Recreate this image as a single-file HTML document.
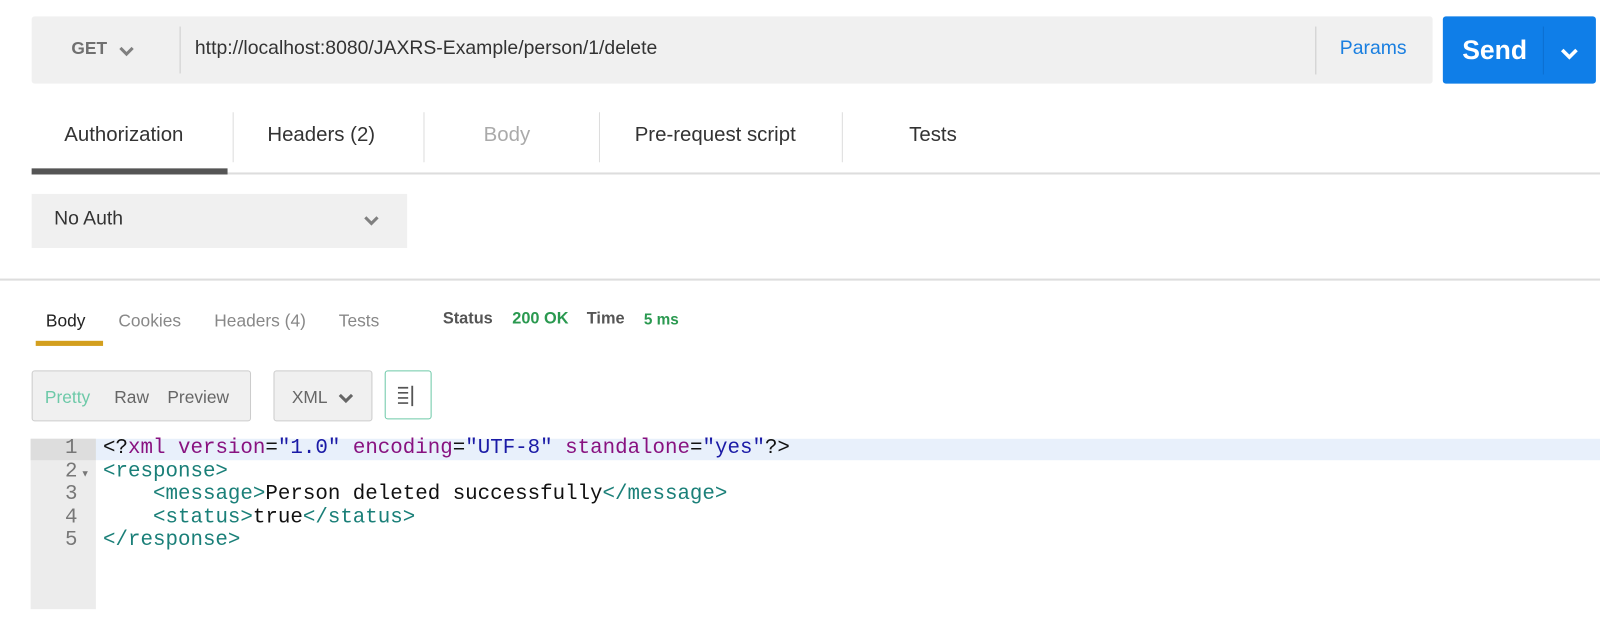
<!DOCTYPE html>
<html><head><style>
body{margin:0;width:1600px;height:609px;background:#fff;position:relative;overflow:hidden;font-family:"Liberation Sans",sans-serif;}
#w{position:absolute;left:0;top:0;width:1600px;height:609px;transform:scale(1.0204);transform-origin:0 0;}
.a{position:absolute;}
.t{position:absolute;white-space:nowrap;}
.code{font-family:"Liberation Mono",monospace;font-size:20.4px;line-height:22.5px;}
.tg{color:#1a7f78}.at{color:#881280}.st{color:#1a1aa6}
</style></head><body><div id="w">
<div class="a" style="left:31px;top:16px;width:1373px;height:66px;background:#f0f0f0;border-radius:3px"></div>
<div class="t" style="left:70px;top:38px;font-size:17px;color:#707070;font-weight:bold">GET</div>
<svg class="a" style="left:116px;top:44px" width="16" height="12"><path d="M2 3l6 6 6-6" stroke="#808080" stroke-width="3" fill="none"/></svg>
<div class="a" style="left:176px;top:26px;width:1px;height:46px;background:#ccc"></div>
<div class="t" style="left:191px;top:37px;font-size:19px;color:#333">http://localhost:8080/JAXRS-Example/person/1/delete</div>
<div class="a" style="left:1289px;top:26px;width:1px;height:47px;background:#ccc"></div>
<div class="t" style="left:1313px;top:37px;font-size:19px;color:#1a7fe0">Params</div>
<div class="a" style="left:1414px;top:16px;width:150px;height:66px;background:#0f7ee8;border-radius:3px"></div>
<div class="t" style="left:1433px;top:34px;font-size:26px;color:#fff;font-weight:bold">Send</div>
<div class="a" style="left:1512px;top:26px;width:1px;height:47px;background:#0b6fd0"></div>
<svg class="a" style="left:1528px;top:46px" width="20" height="14"><path d="M3 3l7 7 7-7" stroke="#fff" stroke-width="3.5" fill="none"/></svg>

<div class="a" style="left:31px;top:169px;width:1569px;height:2px;background:#ddd"></div>
<div class="a" style="left:31px;top:165px;width:192px;height:6px;background:#555"></div>
<div class="t" style="left:63px;top:121px;font-size:20px;color:#333">Authorization</div>
<div class="a" style="left:228px;top:110px;width:1px;height:49px;background:#ddd"></div>
<div class="t" style="left:262px;top:121px;font-size:20px;color:#333">Headers (2)</div>
<div class="a" style="left:415px;top:110px;width:1px;height:49px;background:#ddd"></div>
<div class="t" style="left:474px;top:121px;font-size:20px;color:#aaa">Body</div>
<div class="a" style="left:587px;top:110px;width:1px;height:49px;background:#ddd"></div>
<div class="t" style="left:622px;top:121px;font-size:20px;color:#333">Pre-request script</div>
<div class="a" style="left:825px;top:110px;width:1px;height:49px;background:#ddd"></div>
<div class="t" style="left:891px;top:121px;font-size:20px;color:#333">Tests</div>

<div class="a" style="left:31px;top:190px;width:368px;height:53px;background:#f0f0f0"></div>
<div class="t" style="left:53px;top:204px;font-size:19px;color:#333">No Auth</div>
<svg class="a" style="left:356px;top:210px" width="16" height="12"><path d="M2 3l6 6 6-6" stroke="#808080" stroke-width="3" fill="none"/></svg>
<div class="a" style="left:0;top:273px;width:1600px;height:2px;background:#ddd"></div>

<div class="t" style="left:45px;top:305px;font-size:17px;color:#222">Body</div>
<div class="a" style="left:35px;top:334px;width:66px;height:5px;background:#d39f1e"></div>
<div class="t" style="left:116px;top:305px;font-size:17px;color:#888">Cookies</div>
<div class="t" style="left:210px;top:305px;font-size:17px;color:#888">Headers (4)</div>
<div class="t" style="left:332px;top:305px;font-size:17px;color:#888">Tests</div>
<div class="t" style="left:434px;top:304px;font-size:16px;color:#555;font-weight:bold">Status</div>
<div class="t" style="left:502px;top:304px;font-size:16px;color:#2a9950;font-weight:bold">200 OK</div>
<div class="t" style="left:575px;top:304px;font-size:16px;color:#555;font-weight:bold">Time</div>
<div class="t" style="left:631px;top:305px;font-size:15px;color:#2a9950;font-weight:bold">5 ms</div>

<div class="a" style="left:31px;top:363px;width:213px;height:48px;background:#f0f0f0;border:1px solid #ccc;border-radius:3px"></div>
<div class="t" style="left:44px;top:380px;font-size:17px;color:#6dc9a8">Pretty</div>
<div class="t" style="left:112px;top:380px;font-size:17px;color:#666">Raw</div>
<div class="t" style="left:164px;top:380px;font-size:17px;color:#666">Preview</div>
<div class="a" style="left:268px;top:363px;width:95px;height:48px;background:#f0f0f0;border:1px solid #ccc;border-radius:3px"></div>
<div class="t" style="left:286px;top:380px;font-size:17px;color:#666">XML</div>
<svg class="a" style="left:331px;top:384px" width="16" height="12"><path d="M2 3l6 6 6-6" stroke="#666" stroke-width="3" fill="none"/></svg>
<div class="a" style="left:377px;top:363px;width:44px;height:46px;border:1px solid #6dc9a8;border-radius:3px"></div>
<svg class="a" style="left:388px;top:375px" width="24" height="24"><path d="M2 5h10M2 10h10M2 15h10M2 20h10" stroke="#555" stroke-width="1.6"/><path d="M16 3v20" stroke="#555" stroke-width="1.8"/></svg>

<div class="a" style="left:30px;top:430px;width:64px;height:167px;background:#ececec"></div>
<div class="a" style="left:30px;top:430px;width:64px;height:21px;background:#ddd"></div>
<div class="a" style="left:94px;top:430px;width:1506px;height:21px;background:#e8f0fb"></div>
<div class="a code" style="left:30px;top:429px;width:46px;text-align:right;color:#777">1<br>2<br>3<br>4<br>5</div>
<div class="t" style="left:79px;top:459px;font-size:9px;color:#777">▼</div>
<div class="a code" style="left:101px;top:429px;white-space:pre;color:#111"><span>&lt;?</span><span class="at">xml version</span>=<span class="st">"1.0"</span> <span class="at">encoding</span>=<span class="st">"UTF-8"</span> <span class="at">standalone</span>=<span class="st">"yes"</span>?&gt;
<span class="tg">&lt;response&gt;</span>
    <span class="tg">&lt;message&gt;</span>Person deleted successfully<span class="tg">&lt;/message&gt;</span>
    <span class="tg">&lt;status&gt;</span>true<span class="tg">&lt;/status&gt;</span>
<span class="tg">&lt;/response&gt;</span></div>
</div></body></html>
